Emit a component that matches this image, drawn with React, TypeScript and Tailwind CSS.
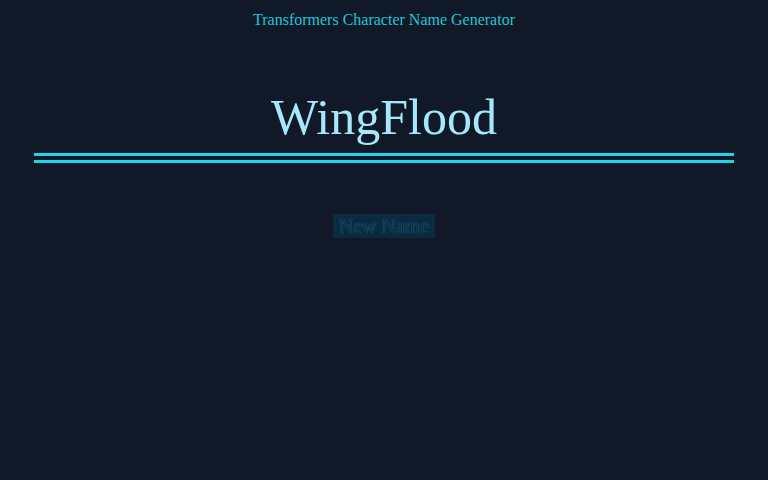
export default function App() {
  return (
    <div className="min-h-screen bg-[#111827] text-center font-['Liberation_Serif',serif]">
      <p className="pt-2 text-base leading-6 text-[#22c5d6]">Transformers Character Name Generator</p>
      <div className="mx-[34px] mt-[59px] border-b-[10px] border-double border-[#22d3ee] pb-[10px]">
        <h1 className="text-[50px] leading-[52px] text-[#a5e8fb]">WingFlood</h1>
      </div>
      <div className="mt-[51px]">
        <button className="bg-[#0b2a40] px-[6px] text-[20px] leading-6 text-[#0d2b40] [text-shadow:0_0_1px_#1f8fa8]">
          New Name
        </button>
      </div>
    </div>
  );
}
